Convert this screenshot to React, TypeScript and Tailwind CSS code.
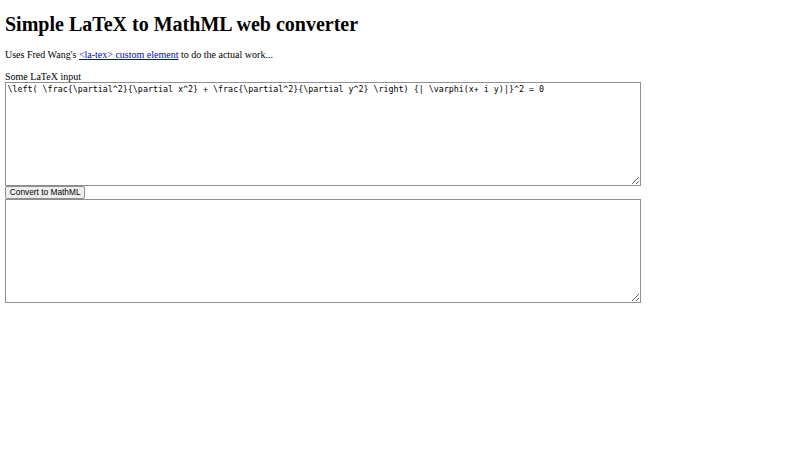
import React, { useState } from "react";

const App: React.FC = () => {
  const [latex, setLatex] = useState<string>(
    "\\left( \\frac{\\partial^2}{\\partial x^2} + \\frac{\\partial^2}{\\partial y^2} \\right) {| \\varphi(x+ i y)|}^2 = 0"
  );
  const [mathml, setMathml] = useState<string>("");

  return (
    <div className="min-h-screen bg-white px-[5px] text-black font-['Liberation_Serif',serif]">
      <h1 className="pt-[13px] text-[20px] font-bold leading-[23px]">
        Simple LaTeX to MathML web converter
      </h1>
      <p className="mt-[13px] text-[10px] leading-[11.5px]">
        Uses Fred Wang's{" "}
        <a href="#" className="text-[#0000ee] underline">
          &lt;la-tex&gt; custom element
        </a>{" "}
        to do the actual work...
      </p>
      <label className="mt-[10px] block text-[10px] leading-[11px]">
        Some LaTeX input
      </label>
      <textarea
        value={latex}
        onChange={(e) => setLatex(e.target.value)}
        className="block h-[104px] w-[636px] resize border border-[#8f8f8f] px-[1.5px] py-[1.5px] text-[8.33px] leading-[10px] font-['DejaVu_Sans_Mono',monospace] outline-none"
      />
      <button
        onClick={() => setMathml(latex)}
        className="block h-[13px] rounded-[2px] border border-[#8f8f8f] bg-[#efefef] px-[3.75px] text-[8.33px] leading-[11px] font-['Liberation_Sans',Arial,sans-serif]"
      >
        Convert to MathML
      </button>
      <textarea
        value={mathml}
        onChange={(e) => setMathml(e.target.value)}
        className="block h-[104px] w-[636px] resize border border-[#8f8f8f] px-[1.5px] py-[1.5px] text-[8.33px] leading-[10px] font-['DejaVu_Sans_Mono',monospace] outline-none"
      />
    </div>
  );
};

export default App;
